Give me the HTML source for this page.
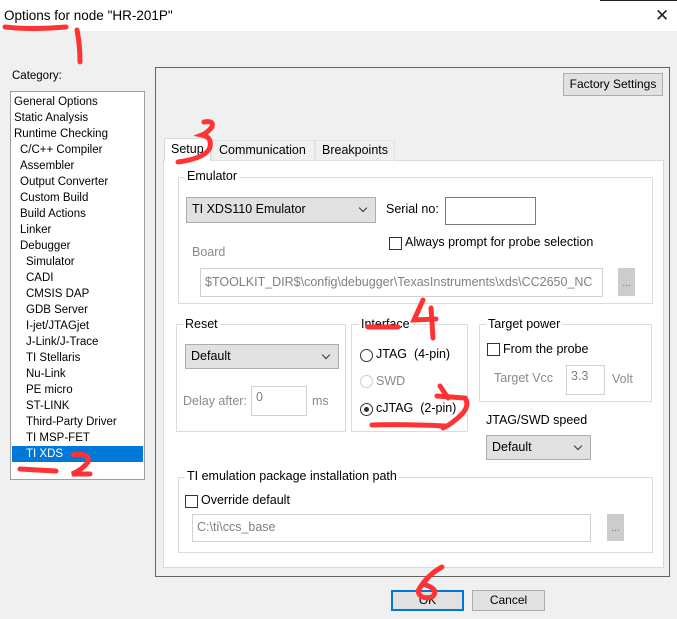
<!DOCTYPE html>
<html><head><meta charset="utf-8"><style>
*{margin:0;padding:0;box-sizing:border-box}
body{width:677px;height:619px;background:#f0f0f0;font-family:"Liberation Sans","Noto Sans CJK SC",sans-serif;font-size:12px;color:#000;position:relative;overflow:hidden}
.a{position:absolute;white-space:nowrap}
.box{position:absolute;border:1px solid #dcdcdc}
.lg{position:absolute;background:#fff;padding:0 2px;font-size:12.5px}
.dd{position:absolute;background:#e1e1e1;border:1px solid #adadad;font-size:12.5px;padding-left:5px;line-height:22px}
.dd:after{content:"";position:absolute;right:9px;top:7px;width:5px;height:5px;border-right:1px solid #333;border-bottom:1px solid #333;transform:rotate(45deg)}
.in{position:absolute;background:#fff;border:1px solid #d0d0d0;color:#808080;font-size:12.5px;padding-left:4px}
.cb{position:absolute;width:13px;height:13px;border:1px solid #333;background:#fff}
.btn{position:absolute;background:#e1e1e1;border:1px solid #adadad;text-align:center;font-size:12px}
.li{position:absolute;left:3px;height:16px;line-height:16px;font-size:11.5px}
</style></head><body>
<div class="a" style="left:0;top:0;width:677px;height:31px;background:#fff"></div>
<div class="a" style="left:600px;top:0;width:77px;height:1px;background:#222"></div>
<div class="a" style="left:4px;top:8px;font-size:13.5px">Options for node "HR-201P"</div>
<div class="a" style="left:655px;top:6px;font-size:17px;color:#222">✕</div>
<div class="a" style="left:12px;top:70px;font-size:11.5px">Category:</div>
<div class="a" style="left:10px;top:91px;width:135px;height:389px;background:#fff;border:1px solid #9a9ea6">
<div class="li" style="top:2px">General Options</div>
<div class="li" style="top:18px">Static Analysis</div>
<div class="li" style="top:34px">Runtime Checking</div>
<div class="li" style="top:50px;left:9px">C/C++ Compiler</div>
<div class="li" style="top:66px;left:9px">Assembler</div>
<div class="li" style="top:82px;left:9px">Output Converter</div>
<div class="li" style="top:98px;left:9px">Custom Build</div>
<div class="li" style="top:114px;left:9px">Build Actions</div>
<div class="li" style="top:130px;left:9px">Linker</div>
<div class="li" style="top:146px;left:9px">Debugger</div>
<div class="li" style="top:162px;left:15px">Simulator</div>
<div class="li" style="top:178px;left:15px">CADI</div>
<div class="li" style="top:194px;left:15px">CMSIS DAP</div>
<div class="li" style="top:210px;left:15px">GDB Server</div>
<div class="li" style="top:226px;left:15px">I-jet/JTAGjet</div>
<div class="li" style="top:242px;left:15px">J-Link/J-Trace</div>
<div class="li" style="top:258px;left:15px">TI Stellaris</div>
<div class="li" style="top:274px;left:15px">Nu-Link</div>
<div class="li" style="top:290px;left:15px">PE micro</div>
<div class="li" style="top:306px;left:15px">ST-LINK</div>
<div class="li" style="top:322px;left:15px">Third-Party Driver</div>
<div class="li" style="top:338px;left:15px">TI MSP-FET</div>
<div class="li" style="top:354px;left:1px;width:131px;padding-left:14px;background:#0078d7;color:#fff">TI XDS</div>
</div>
<div class="a" style="left:155px;top:67px;width:515px;height:510px;border:1px solid #646464"></div>
<div class="btn" style="left:563px;top:73px;width:100px;height:23px;line-height:21px">Factory Settings</div>
<div class="a" style="left:163px;top:160px;width:501px;height:408px;background:#fff;border:1px solid #d9d9d9"></div>
<div class="a" style="left:164px;top:138px;width:47px;height:23px;background:#fff;border:1px solid #d9d9d9;border-bottom:none;font-size:12.5px;padding:3px 0 0 6px">Setup</div>
<div class="a" style="left:211px;top:140px;width:104px;height:21px;border:1px solid #e3e3e3;font-size:12.5px;padding:2px 0 0 7px">Communication</div>
<div class="a" style="left:315px;top:140px;width:80px;height:21px;border:1px solid #e3e3e3;font-size:12.5px;padding:2px 0 0 6px">Breakpoints</div>

<div class="box" style="left:178px;top:177px;width:475px;height:127px"></div>
<div class="lg" style="left:185px;top:169px">Emulator</div>
<div class="dd" style="left:186px;top:197px;width:190px;height:26px">TI XDS110 Emulator</div>
<div class="a" style="left:386px;top:202px;font-size:12.5px">Serial no:</div>
<div class="a" style="left:445px;top:197px;width:91px;height:28px;border:1px solid #7a7a7a;background:#fff"></div>
<div class="cb" style="left:389px;top:237px"></div>
<div class="a" style="left:405px;top:235px;font-size:12.5px">Always prompt for probe selection</div>
<div class="a" style="left:192px;top:245px;font-size:12.5px;color:#8a8a8a">Board</div>
<div class="in" style="left:200px;top:268px;width:403px;height:29px;line-height:27px;overflow:hidden">$TOOLKIT_DIR$\config\debugger\TexasInstruments\xds\CC2650_NC</div>
<div class="btn" style="left:618px;top:268px;width:17px;height:28px;background:#ccc;border-color:#ccc;color:#777;line-height:30px;font-size:10px">...</div>

<div class="box" style="left:176px;top:324px;width:170px;height:108px"></div>
<div class="lg" style="left:183px;top:317px;background:#fff">Reset</div>
<div class="dd" style="left:185px;top:344px;width:154px;height:25px">Default</div>
<div class="a" style="left:183px;top:394px;font-size:12.5px;color:#8a8a8a">Delay after:</div>
<div class="in" style="left:251px;top:386px;width:56px;height:30px;line-height:20px">0</div>
<div class="a" style="left:312px;top:394px;font-size:12.5px;color:#8a8a8a">ms</div>

<div class="box" style="left:351px;top:324px;width:117px;height:108px"></div>
<div class="lg" style="left:359px;top:317px">Interface</div>
<div class="a" style="left:360px;top:349px;width:13px;height:13px;border:1px solid #333;border-radius:50%;background:#fff"></div>
<div class="a" style="left:376px;top:347px;font-size:12.5px">JTAG&nbsp; (4-pin)</div>
<div class="a" style="left:360px;top:375px;width:13px;height:13px;border:1px solid #ccc;border-radius:50%;background:#fff"></div>
<div class="a" style="left:376px;top:374px;font-size:12.5px;color:#8a8a8a">SWD</div>
<div class="a" style="left:360px;top:403px;width:13px;height:13px;border:1px solid #333;border-radius:50%;background:#fff"><div style="position:absolute;left:3px;top:3px;width:5px;height:5px;border-radius:50%;background:#333"></div></div>
<div class="a" style="left:376px;top:401px;font-size:12.5px">cJTAG&nbsp; (2-pin)</div>

<div class="box" style="left:479px;top:324px;width:173px;height:78px"></div>
<div class="lg" style="left:486px;top:317px">Target power</div>
<div class="cb" style="left:487px;top:343px"></div>
<div class="a" style="left:503px;top:342px;font-size:12.5px">From the probe</div>
<div class="a" style="left:494px;top:371px;font-size:12.5px;color:#8a8a8a">Target Vcc</div>
<div class="in" style="left:566px;top:365px;width:39px;height:30px;line-height:20px">3.3</div>
<div class="a" style="left:612px;top:372px;font-size:12.5px;color:#8a8a8a">Volt</div>
<div class="a" style="left:486px;top:413px;font-size:12.5px">JTAG/SWD speed</div>
<div class="dd" style="left:486px;top:435px;width:105px;height:25px">Default</div>

<div class="box" style="left:178px;top:477px;width:475px;height:76px"></div>
<div class="lg" style="left:185px;top:469px">TI emulation package installation path</div>
<div class="cb" style="left:185px;top:495px"></div>
<div class="a" style="left:201px;top:493px;font-size:12.5px">Override default</div>
<div class="in" style="left:192px;top:514px;width:399px;height:28px;line-height:24px">C:\ti\ccs_base</div>
<div class="btn" style="left:607px;top:514px;width:17px;height:27px;background:#ccc;border-color:#ccc;color:#777;line-height:28px;font-size:10px">...</div>

<div class="btn" style="left:391px;top:590px;width:73px;height:21px;border:2px solid #0078d7;line-height:17px">OK</div>
<div class="btn" style="left:472px;top:590px;width:73px;height:21px;line-height:19px">Cancel</div>

<svg class="a" style="left:0;top:0" width="677" height="619" fill="none" stroke="#f33" stroke-width="5" stroke-linecap="round">
<path d="M5 27 Q30 30 66 27"/>
<path d="M77 30 Q80 45 80 62"/>
<path d="M204 122 Q214 120 212 127 Q207 133 202 135 Q212 137 210 147 Q207 158 178 162"/>
<path d="M368 327 L398 327"/>
<path d="M423 300 L414 320 L436 319 M431 308 L433 338"/>
<path d="M372 425 Q405 424 445 426"/>
<path d="M440 386 L448 398 M437 396 L465 398 Q470 405 462 414 Q452 424 443 428"/>
<path d="M20 469 L56 471"/>
<path d="M73 455 Q90 452 88 462 Q82 470 72 474 L90 474"/>
<path d="M442 567 Q427 575 418 591 Q420 600 432 597 Q440 590 426 585"/>
</svg>
</body></html>
